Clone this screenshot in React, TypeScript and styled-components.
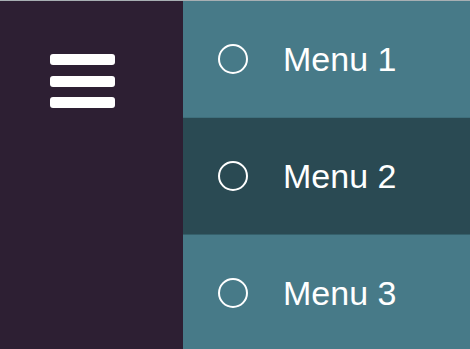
import { FC } from 'react';
import styled, { createGlobalStyle, css } from 'styled-components';

const GlobalStyle = createGlobalStyle`
	html, body {
		margin: 0;
		padding: 0;
		background: #2d1f33;
	}
	body {
		font-family: 'Liberation Sans', Arial, sans-serif;
	}
`;

const Layout = styled.div`
	display: flex;
	width: 470px;
	height: 349px;
	box-sizing: border-box;
	border-top: 1px solid #a7afb3;
	overflow: hidden;
`;

const Sidebar = styled.aside`
	width: 183px;
	flex-shrink: 0;
	background: #2d1f33;
	padding: 53px 0 0 50px;
	box-sizing: border-box;
`;

const Burger = styled.div`
	display: flex;
	flex-direction: column;
	gap: 10.5px;
	width: 65px;
`;

const Bar = styled.span`
	display: block;
	height: 11px;
	border-radius: 3px;
	background: #ffffff;
`;

const Menu = styled.nav`
	flex: 1;
	display: flex;
	flex-direction: column;
	background: #477a88;
`;

interface PropsActive {
	active?: boolean;
}

const Item = styled.div<PropsActive>`
	display: flex;
	align-items: center;
	height: 117px;
	flex-shrink: 0;
	padding-left: 35px;
	box-sizing: border-box;
	gap: 35px;
	background: #477a88;
	border-bottom: 1px solid #3f6f7c;
	${(props) =>
		props.active &&
		css`
			background: #2a4a53;
			border-bottom-color: #35606b;
		`}
`;

const Ring = styled.span`
	width: 30px;
	height: 30px;
	border-radius: 50%;
	border: 2.7px solid #ffffff;
	box-sizing: border-box;
`;

const Label = styled.span`
	color: #ffffff;
	font-size: 34px;
	line-height: 1;
`;

const items = ['Menu 1', 'Menu 2', 'Menu 3'];

const App: FC = () => {
	return (
		<>
			<GlobalStyle />
			<Layout>
				<Sidebar>
					<Burger>
						<Bar />
						<Bar />
						<Bar />
					</Burger>
				</Sidebar>
				<Menu>
					{items.map((label, i) => (
						<Item key={label} active={i === 1}>
							<Ring />
							<Label>{label}</Label>
						</Item>
					))}
				</Menu>
			</Layout>
		</>
	);
};

export default App;
